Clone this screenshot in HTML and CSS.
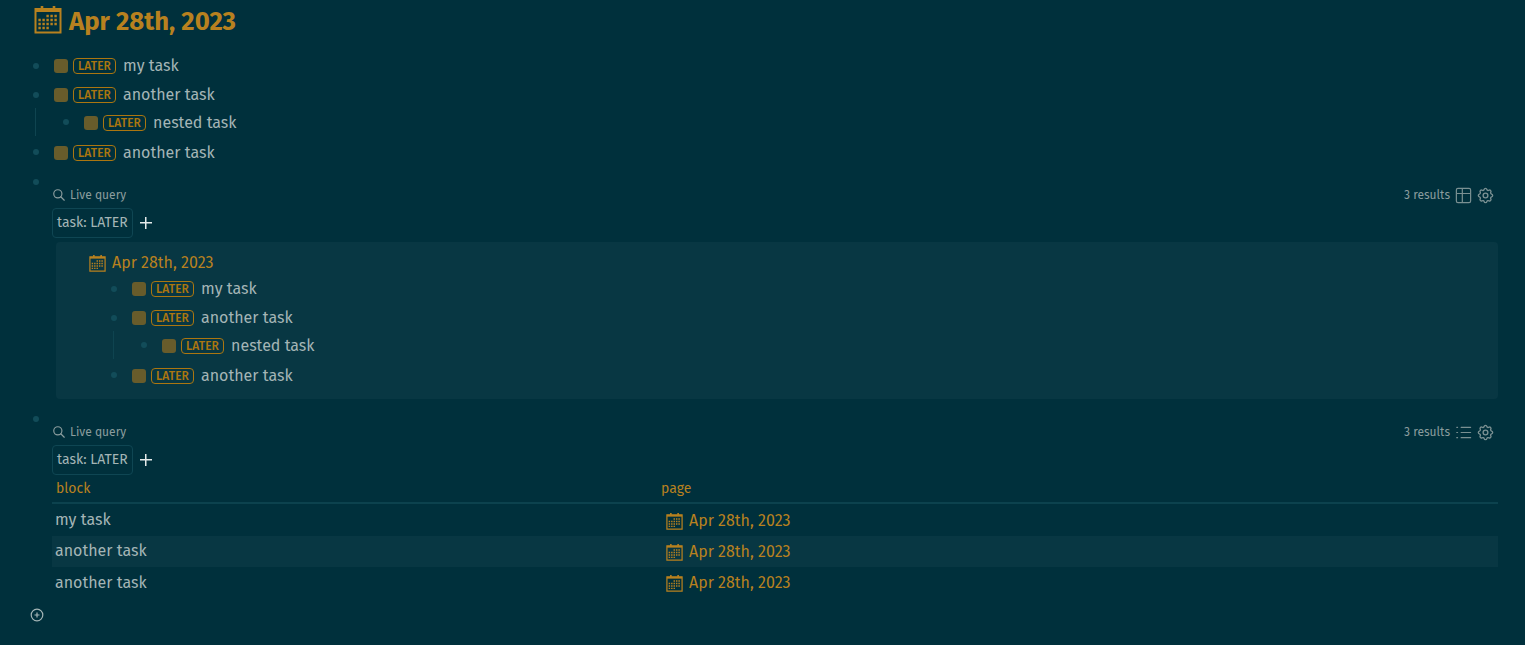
FILE: index.html
```html
<!DOCTYPE html>
<html lang="en">
<head>
    <meta charset="UTF-8">
    <meta name="viewport" content="width=device-width, initial-scale=1.0">
    <title>Apr 28th, 2023</title>
    <link rel="stylesheet" href="styles.css">
</head>
<body>
    <svg class="defs" width="0" height="0">
        <symbol id="cal" viewBox="0 0 28 28">
            <path d="M1.5 3h25v23.5h-25z" fill="none" stroke="currentColor" stroke-width="2"/>
            <path d="M1.5 4.5h25" stroke="currentColor" stroke-width="3"/>
            <path d="M8 0v5M20 0v5" stroke="currentColor" stroke-width="2.6"/>
            <path d="M12.4 10h11.6M4.4 14h19.6M4.4 18h19.6M4.4 22h11.6" stroke="currentColor" stroke-width="2.4" stroke-dasharray="2.4 1.6" fill="none"/>
        </symbol>
        <symbol id="search" viewBox="0 0 24 24">
            <circle cx="10" cy="10" r="7" fill="none" stroke="currentColor" stroke-width="2"/>
            <path d="M21 21l-6-6" stroke="currentColor" stroke-width="2" stroke-linecap="round"/>
        </symbol>
        <symbol id="table" viewBox="0 0 24 24">
            <rect x="3" y="3" width="18" height="18" rx="2" fill="none" stroke="currentColor" stroke-width="1.5"/>
            <path d="M3 9.5h18M10.5 3v18" stroke="currentColor" stroke-width="1.5"/>
        </symbol>
        <symbol id="list" viewBox="0 0 24 24">
            <path d="M9 5.5h12M9 12h12M9 18.5h12M3.5 5.5h1M3.5 12h1M3.5 18.5h1" stroke="currentColor" stroke-width="1.5" stroke-linecap="round"/>
        </symbol>
        <symbol id="gear" viewBox="0 0 24 24">
            <path d="M10.3 4.3c.4-1.8 3-1.8 3.4 0a1.7 1.7 0 0 0 2.6 1.1c1.5-.9 3.3.8 2.4 2.4a1.7 1.7 0 0 0 1 2.5c1.8.5 1.8 3 0 3.4a1.7 1.7 0 0 0-1 2.6c.9 1.5-.9 3.3-2.4 2.4a1.7 1.7 0 0 0-2.6 1c-.4 1.8-3 1.8-3.4 0a1.7 1.7 0 0 0-2.6-1c-1.5.9-3.3-.9-2.4-2.4a1.7 1.7 0 0 0-1-2.6c-1.8-.4-1.8-3 0-3.4a1.7 1.7 0 0 0 1-2.5c-.9-1.6.9-3.3 2.4-2.4a1.7 1.7 0 0 0 2.6-1.1z" fill="none" stroke="currentColor" stroke-width="1.7"/>
            <circle cx="12" cy="12" r="3" fill="none" stroke="currentColor" stroke-width="1.7"/>
        </symbol>
    </svg>

    <div class="page">
        <h1 class="page-title"><svg class="cal-big"><use href="#cal"/></svg>Apr 28th, 2023</h1>

        <div class="blocks">
            <div class="block"><span class="bullet"></span><span class="check"></span><span class="tag">LATER</span><span>my task</span></div>
            <div class="block"><span class="bullet"></span><span class="check"></span><span class="tag">LATER</span><span>another task</span></div>
            <div class="children">
                <div class="block nested"><span class="bullet"></span><span class="check"></span><span class="tag">LATER</span><span>nested task</span></div>
            </div>
            <div class="block last"><span class="bullet"></span><span class="check"></span><span class="tag">LATER</span><span>another task</span></div>

            <div class="block bare"><span class="bullet"></span></div>
            <div class="query">
                <div class="query-head">
                    <svg class="ico-search"><use href="#search"/></svg><span>Live query</span>
                    <span class="results">3 results</span>
                    <svg class="ico"><use href="#table"/></svg>
                    <svg class="ico"><use href="#gear"/></svg>
                </div>
                <div class="filter-row"><span class="filter">task: LATER</span><span class="plus"></span></div>
                <div class="result-card">
                    <div class="card-title"><svg class="cal-small"><use href="#cal"/></svg>Apr 28th, 2023</div>
                    <div class="block"><span class="bullet"></span><span class="check"></span><span class="tag">LATER</span><span>my task</span></div>
                    <div class="block"><span class="bullet"></span><span class="check"></span><span class="tag">LATER</span><span>another task</span></div>
                    <div class="children">
                        <div class="block nested"><span class="bullet"></span><span class="check"></span><span class="tag">LATER</span><span>nested task</span></div>
                    </div>
                    <div class="block last"><span class="bullet"></span><span class="check"></span><span class="tag">LATER</span><span>another task</span></div>
                </div>
            </div>

            <div class="block bare second"><span class="bullet"></span></div>
            <div class="query">
                <div class="query-head">
                    <svg class="ico-search"><use href="#search"/></svg><span>Live query</span>
                    <span class="results">3 results</span>
                    <svg class="ico"><use href="#list"/></svg>
                    <svg class="ico"><use href="#gear"/></svg>
                </div>
                <div class="filter-row"><span class="filter">task: LATER</span><span class="plus"></span></div>
                <div class="table">
                    <div class="table-head"><span>block</span><span>page</span></div>
                    <div class="table-row"><span class="cell">my task</span><span class="page-ref"><svg class="cal-small"><use href="#cal"/></svg>Apr 28th, 2023</span></div>
                    <div class="table-row odd"><span class="cell">another task</span><span class="page-ref"><svg class="cal-small"><use href="#cal"/></svg>Apr 28th, 2023</span></div>
                    <div class="table-row end"><span class="cell">another task</span><span class="page-ref"><svg class="cal-small"><use href="#cal"/></svg>Apr 28th, 2023</span></div>
                </div>
            </div>
        </div>

        <div class="add-block">
            <svg class="ico-add" viewBox="0 0 14 14"><circle cx="7" cy="7" r="5.8" fill="none" stroke="currentColor" stroke-width="1.2"/><path d="M4.5 7h5M7 4.5v5" stroke="currentColor" stroke-width="1.2"/></svg>
        </div>
    </div>
</body>
</html>
```

FILE: styles.css
```css
body {
    font-family: "Fira Sans", Roboto, sans-serif;
    font-size: 16px;
    background-color: #00303c;
    color: #a4b5b6;
    margin: 0;
    padding: 0;
}
.defs {
    display: block;
    height: 0;
}
.page {
    padding: 0 27px 0 30px;
}
.page-title {
    display: flex;
    align-items: center;
    margin: 0;
    height: 42px;
    padding-left: 4px;
    font-size: 25.76px;
    font-weight: 700;
    color: #b8811f;
}
.cal-big {
    width: 28px;
    height: 28px;
    margin: -2px 7px 0 0;
}
.blocks {
    margin-top: 9px;
}
.block {
    display: flex;
    align-items: center;
    height: 29px;
}
.block.nested {
    height: 28px;
}
.block.last {
    height: 30px;
}
.block.bare {
    height: 29px;
}
.block.bare.second {
    margin-top: 5px;
    height: 29px;
}
.bullet {
    width: 6px;
    height: 6px;
    margin: 0 15px 0 3px;
    border-radius: 50%;
    background-color: #124c59;
}
.check {
    width: 14px;
    height: 14px;
    margin-top: 1px;
    border-radius: 3px;
    background-color: #685c2b;
}
.tag {
    margin: 1px 7px 0 5px;
    padding: 0 4px;
    height: 16px;
    box-sizing: border-box;
    line-height: 14px;
    border: 1px solid #ab7610;
    border-radius: 4px;
    font-size: 12px;
    font-weight: 500;
    letter-spacing: 0.1px;
    color: #ab7610;
}
.children {
    margin: -1px 0 1px 5px;
    padding-left: 24px;
    border-left: 1px solid #0f4450;
}
.query {
    margin-left: 22px;
    margin-top: -9px;
}
.query-head {
    display: flex;
    align-items: center;
    height: 16px;
    padding-right: 3px;
    font-size: 12px;
    color: #8b9d9e;
}
.ico-search {
    width: 14px;
    height: 14px;
    margin-right: 4px;
}
.results {
    margin-left: auto;
    margin-right: 1px;
}
.ico {
    width: 19px;
    height: 19px;
    margin-left: 3px;
    color: #7a9092;
}
.filter-row {
    display: flex;
    align-items: center;
    margin-top: 5px;
}
.filter {
    display: block;
    box-sizing: border-box;
    height: 30px;
    line-height: 28px;
    padding: 0 4px;
    border: 1px solid #0f4653;
    border-radius: 4px;
    font-size: 14px;
}
.plus {
    width: 12px;
    height: 12px;
    margin-left: 7px;
    background:
        linear-gradient(#e4eaea, #e4eaea) center / 12px 1.5px no-repeat,
        linear-gradient(#e4eaea, #e4eaea) center / 1.5px 12px no-repeat;
}
.result-card {
    margin: 4px 0 0 4px;
    height: 157px;
    box-sizing: border-box;
    padding: 8px 0 0 52px;
    border-radius: 4px;
    background-color: #083743;
}
.card-title {
    display: flex;
    align-items: center;
    height: 24px;
    margin-left: -19px;
    color: #b8811f;
}
.cal-small {
    width: 17px;
    height: 17px;
    margin: 2px 6px 0 0;
}
.table {
    margin-top: 1px;
}
.table-head {
    display: grid;
    grid-template-columns: 605px 1fr;
    height: 26px;
    line-height: 26px;
    border-bottom: 2px solid #0c424e;
    font-size: 14px;
    color: #b8811f;
}
.table-head span {
    padding-left: 4px;
}
.table-row {
    display: grid;
    grid-template-columns: 605px 1fr;
    align-items: center;
    height: 32px;
}
.table-row.odd {
    height: 31px;
    background-color: #083743;
}
.table-row.end {
    height: 30px;
}
.cell {
    padding: 0 0 1px 3px;
}
.odd .cell {
    padding-bottom: 2px;
}
.end .cell {
    padding-bottom: 0;
}
.page-ref {
    display: flex;
    align-items: center;
    margin-left: 9px;
    color: #b8811f;
}
.add-block {
    display: flex;
    align-items: center;
    height: 20px;
    margin-top: 8px;
    color: #a4b5b6;
}
.ico-add {
    width: 14px;
    height: 14px;
}
```
